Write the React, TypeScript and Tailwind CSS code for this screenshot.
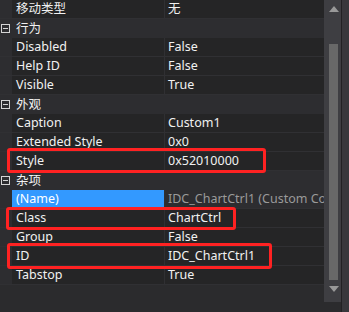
import React from "react";

type Row =
  | { kind: "cat"; label: string }
  | { kind: "prop"; name: string; value: string; selected?: boolean };

const rows: Row[] = [
  { kind: "prop", name: "移动类型", value: "无" },
  { kind: "cat", label: "行为" },
  { kind: "prop", name: "Disabled", value: "False" },
  { kind: "prop", name: "Help ID", value: "False" },
  { kind: "prop", name: "Visible", value: "True" },
  { kind: "cat", label: "外观" },
  { kind: "prop", name: "Caption", value: "Custom1" },
  { kind: "prop", name: "Extended Style", value: "0x0" },
  { kind: "prop", name: "Style", value: "0x52010000" },
  { kind: "cat", label: "杂项" },
  { kind: "prop", name: "(Name)", value: "IDC_ChartCtrl1 (Custom Control)", selected: true },
  { kind: "prop", name: "Class", value: "ChartCtrl" },
  { kind: "prop", name: "Group", value: "False" },
  { kind: "prop", name: "ID", value: "IDC_ChartCtrl1" },
  { kind: "prop", name: "Tabstop", value: "True" },
];

function Minus() {
  return (
    <svg width="9" height="9" viewBox="0 0 9 9" className="block">
      <rect x="0.5" y="0.5" width="8" height="8" fill="none" stroke="#d4d4d4" strokeWidth="1" />
      <line x1="2" y1="4.5" x2="7" y2="4.5" stroke="#d4d4d4" strokeWidth="1" />
    </svg>
  );
}

export default function App() {
  return (
    <div
      className="relative w-[349px] h-[312px] overflow-hidden bg-[#2d2d30] flex text-[12.5px] text-[#f1f1f1]"
      style={{ fontFamily: '"Noto Sans", "Noto Sans CJK SC", sans-serif' }}
    >
      <div className="w-[324px] flex flex-col">
        {rows.map((r, i) =>
          r.kind === "cat" ? (
            <div key={i} className="h-[19px] flex items-center bg-[#2d2d30]">
              <div className="w-[16px] pl-[1px] flex items-center">
                <Minus />
              </div>
              <span className="leading-none pt-[1px]">{r.label}</span>
            </div>
          ) : (
            <div key={i} className="h-[19px] flex border-b border-[#303033]">
              <div className="w-[12px] bg-[#2d2d30]" />
              <div
                className={
                  r.selected
                    ? "w-[152px] flex items-center pl-[4px] pt-[1px] bg-[#3399ff] text-white"
                    : "w-[152px] flex items-center pl-[4px] pt-[1px] bg-[#252526]"
                }
              >
                <span className="leading-none whitespace-nowrap">{r.name}</span>
              </div>
              <div className="w-px bg-[#303033]" />
              <div
                className={
                  r.selected
                    ? "flex-1 flex items-center pl-[3px] pt-[1px] bg-[#2d2d30] text-[#9a9a9a] overflow-hidden"
                    : "flex-1 flex items-center pl-[3px] pt-[1px] bg-[#252526] overflow-hidden"
                }
              >
                <span className="leading-none whitespace-nowrap">{r.value}</span>
              </div>
            </div>
          )
        )}
        <div className="flex-1 bg-[#2b2b2d]" />
      </div>
      <div className="w-[17px] flex flex-col">
        <div className="h-[302px] bg-[#3e3e42] flex flex-col items-center">
          <svg width="10" height="6" viewBox="0 0 10 6" className="mt-[6px] ml-[2px]">
            <polygon points="0,6 10,6 5,0" fill="#999999" />
          </svg>
          <div className="mt-[32px] ml-[2px] w-[9px] h-[236px] bg-[#686868]" />
          <svg width="10" height="6" viewBox="0 0 10 6" className="mt-[6px] ml-[2px]">
            <polygon points="0,0 10,0 5,6" fill="#999999" />
          </svg>
        </div>
        <div className="flex-1 bg-[#2b2b2d]" />
      </div>
      <div className="w-px bg-[#222224]" />
      <div className="w-[7px] bg-[#38383c]" />

      <div className="absolute left-[7px] top-[148px] w-[259px] h-[25px] border-[3px] border-[#ff2222] rounded-[3px]" />
      <div className="absolute left-[6px] top-[207px] w-[230px] h-[23px] border-[3px] border-[#ff2222] rounded-[3px]" />
      <div className="absolute left-[7px] top-[243px] w-[265px] h-[26px] border-[3px] border-[#ff2222] rounded-[3px]" />
    </div>
  );
}
